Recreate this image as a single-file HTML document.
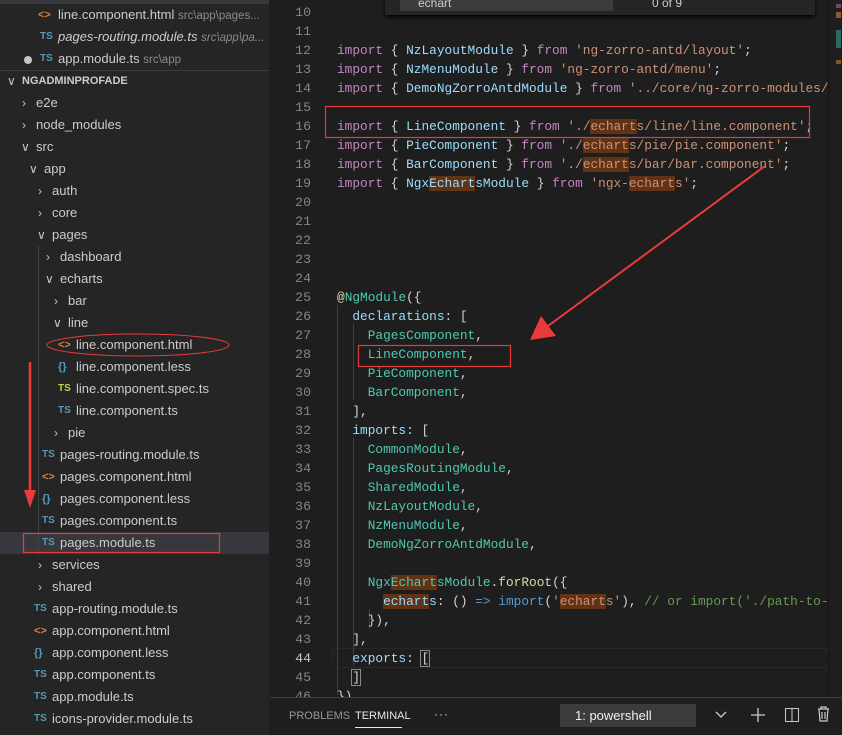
<!DOCTYPE html>
<html><head><meta charset="utf-8"><style>
*{margin:0;padding:0;box-sizing:border-box}
body{width:842px;height:735px;overflow:hidden;background:#1e1e1e;position:relative;font-family:"Liberation Sans",sans-serif}
#side{position:absolute;left:0;top:0;width:269px;height:735px;background:#252526}
.r{position:absolute;left:0;width:269px;height:22px;line-height:22px;font-size:13px;color:#cccccc;white-space:nowrap}
.r span{position:absolute;top:0}
.ar{color:#c5c5c5;font-size:12px}
.ts{color:#519aba;font-size:10px;font-weight:bold}
.tsy{color:#cbcb41;font-size:10px;font-weight:bold}
.ht{color:#e37933;font-size:11px;font-weight:bold}
.br{color:#519aba;font-size:11px;font-weight:bold}
.d{color:#8b8b8b;font-size:11.5px}
#code{position:absolute;left:270px;top:0;width:560px;height:697px;font-family:"Liberation Mono",monospace;font-size:12.8px}
.l{position:absolute;left:0;width:560px;height:19px;line-height:19px;white-space:pre;color:#d4d4d4;font-size:12.8px}
.n{position:absolute;left:0;width:41px;text-align:right;color:#858585;font-size:13.2px}
.t{position:absolute;left:67px}
.k{color:#c586c0}.c{color:#4ec9b0}.s{color:#ce9178}.p{color:#9cdcfe}.f{color:#dcdcaa}.b{color:#569cd6}.cm{color:#6a9955}
.h{background:#613214}
.g{position:absolute;width:1px;background:#404040}
</style></head><body>
<div id="side">
<div style="position:absolute;left:0;top:0;width:269px;height:4px;background:#37373d"></div>
<div class="r" style="top:4px"><span class="ht" style="left:38px">&lt;&gt;</span><span style="left:58px">line.component.html <span class="d" style="position:static">src\app\pages...</span></span></div>
<div class="r" style="top:26px"><span class="ts" style="left:40px">TS</span><span style="left:58px"><i>pages-routing.module.ts</i> <span class="d" style="position:static"><i>src\app\pa...</i></span></span></div>
<div class="r" style="top:48px"><span style="left:24px;top:8px;width:8px;height:8px;border-radius:4px;background:#c5c5c5"></span><span class="ts" style="left:40px">TS</span><span style="left:58px">app.module.ts <span class="d" style="position:static">src\app</span></span></div>
<div style="position:absolute;left:0;top:70px;width:269px;height:1px;background:#3c3c3c"></div>
<div class="r" style="top:70px"><span class="ar" style="left:7px">&#8744;</span><span style="left:22px;font-size:11px;font-weight:bold">NGADMINPROFADE</span></div>
<div class="r" style="top:92px"><span class="ar" style="left:22px">&#x203A;</span><span style="left:36px">e2e</span></div>
<div class="r" style="top:114px"><span class="ar" style="left:22px">&#x203A;</span><span style="left:36px">node_modules</span></div>
<div class="r" style="top:136px"><span class="ar" style="left:21px">&#8744;</span><span style="left:36px">src</span></div>
<div class="r" style="top:158px"><span class="ar" style="left:29px">&#8744;</span><span style="left:44px">app</span></div>
<div class="r" style="top:180px"><span class="ar" style="left:38px">&#x203A;</span><span style="left:52px">auth</span></div>
<div class="r" style="top:202px"><span class="ar" style="left:38px">&#x203A;</span><span style="left:52px">core</span></div>
<div class="r" style="top:224px"><span class="ar" style="left:37px">&#8744;</span><span style="left:52px">pages</span></div>
<div class="r" style="top:246px"><span class="ar" style="left:46px">&#x203A;</span><span style="left:60px">dashboard</span></div>
<div class="r" style="top:268px"><span class="ar" style="left:45px">&#8744;</span><span style="left:60px">echarts</span></div>
<div class="r" style="top:290px"><span class="ar" style="left:54px">&#x203A;</span><span style="left:68px">bar</span></div>
<div class="r" style="top:312px"><span class="ar" style="left:53px">&#8744;</span><span style="left:68px">line</span></div>
<div class="r" style="top:334px"><span class="ht" style="left:58px">&lt;&gt;</span><span style="left:76px">line.component.html</span></div>
<div class="r" style="top:356px"><span class="br" style="left:58px">{}</span><span style="left:76px">line.component.less</span></div>
<div class="r" style="top:378px"><span class="tsy" style="left:58px">TS</span><span style="left:76px">line.component.spec.ts</span></div>
<div class="r" style="top:400px"><span class="ts" style="left:58px">TS</span><span style="left:76px">line.component.ts</span></div>
<div class="r" style="top:422px"><span class="ar" style="left:54px">&#x203A;</span><span style="left:68px">pie</span></div>
<div class="r" style="top:444px"><span class="ts" style="left:42px">TS</span><span style="left:60px">pages-routing.module.ts</span></div>
<div class="r" style="top:466px"><span class="ht" style="left:42px">&lt;&gt;</span><span style="left:60px">pages.component.html</span></div>
<div class="r" style="top:488px"><span class="br" style="left:42px">{}</span><span style="left:60px">pages.component.less</span></div>
<div class="r" style="top:510px"><span class="ts" style="left:42px">TS</span><span style="left:60px">pages.component.ts</span></div>
<div class="r" style="top:532px;background:#37373d"><span class="ts" style="left:42px">TS</span><span style="left:60px">pages.module.ts</span></div>
<div class="r" style="top:554px"><span class="ar" style="left:38px">&#x203A;</span><span style="left:52px">services</span></div>
<div class="r" style="top:576px"><span class="ar" style="left:38px">&#x203A;</span><span style="left:52px">shared</span></div>
<div class="r" style="top:598px"><span class="ts" style="left:34px">TS</span><span style="left:52px">app-routing.module.ts</span></div>
<div class="r" style="top:620px"><span class="ht" style="left:34px">&lt;&gt;</span><span style="left:52px">app.component.html</span></div>
<div class="r" style="top:642px"><span class="br" style="left:34px">{}</span><span style="left:52px">app.component.less</span></div>
<div class="r" style="top:664px"><span class="ts" style="left:34px">TS</span><span style="left:52px">app.component.ts</span></div>
<div class="r" style="top:686px"><span class="ts" style="left:34px">TS</span><span style="left:52px">app.module.ts</span></div>
<div class="r" style="top:708px"><span class="ts" style="left:34px">TS</span><span style="left:52px">icons-provider.module.ts</span></div>
<div class="g" style="left:38px;top:246px;height:310px"></div>
</div>

<div id="code">
<div style="position:absolute;left:62px;top:648px;width:498px;height:20px;border:1px solid #282828"></div>
<div class="g" style="left:67px;top:305px;height:390px"></div>
<div class="g" style="left:83px;top:324px;height:76px"></div>
<div class="g" style="left:83px;top:438px;height:228px"></div>
<div class="g" style="left:99px;top:609px;height:19px"></div>
<div class="l" style="top:3px"><span class="n">10</span></div>
<div class="l" style="top:22px"><span class="n">11</span></div>
<div class="l" style="top:41px"><span class="n">12</span><span class="t"><span class="k">import</span> { <span class="p">NzLayoutModule</span> } <span class="k">from</span> <span class="s">'ng-zorro-antd/layout'</span>;</span></div>
<div class="l" style="top:60px"><span class="n">13</span><span class="t"><span class="k">import</span> { <span class="p">NzMenuModule</span> } <span class="k">from</span> <span class="s">'ng-zorro-antd/menu'</span>;</span></div>
<div class="l" style="top:79px"><span class="n">14</span><span class="t"><span class="k">import</span> { <span class="p">DemoNgZorroAntdModule</span> } <span class="k">from</span> <span class="s">'../core/ng-zorro-modules/</span></span></div>
<div class="l" style="top:98px"><span class="n">15</span></div>
<div class="l" style="top:117px"><span class="n">16</span><span class="t"><span class="k">import</span> { <span class="p">LineComponent</span> } <span class="k">from</span> <span class="s">'./<span class="h">echart</span>s/line/line.component'</span>;</span></div>
<div class="l" style="top:136px"><span class="n">17</span><span class="t"><span class="k">import</span> { <span class="p">PieComponent</span> } <span class="k">from</span> <span class="s">'./<span class="h">echart</span>s/pie/pie.component'</span>;</span></div>
<div class="l" style="top:155px"><span class="n">18</span><span class="t"><span class="k">import</span> { <span class="p">BarComponent</span> } <span class="k">from</span> <span class="s">'./<span class="h">echart</span>s/bar/bar.component'</span>;</span></div>
<div class="l" style="top:174px"><span class="n">19</span><span class="t"><span class="k">import</span> { <span class="p">Ngx<span class="h">Echart</span>sModule</span> } <span class="k">from</span> <span class="s">'ngx-<span class="h">echart</span>s'</span>;</span></div>
<div class="l" style="top:193px"><span class="n">20</span></div>
<div class="l" style="top:212px"><span class="n">21</span></div>
<div class="l" style="top:231px"><span class="n">22</span></div>
<div class="l" style="top:250px"><span class="n">23</span></div>
<div class="l" style="top:269px"><span class="n">24</span></div>
<div class="l" style="top:288px"><span class="n">25</span><span class="t"><span class="f">@</span><span class="c">NgModule</span>({</span></div>
<div class="l" style="top:307px"><span class="n">26</span><span class="t">  <span class="p">declarations</span>: [</span></div>
<div class="l" style="top:326px"><span class="n">27</span><span class="t">    <span class="c">PagesComponent</span>,</span></div>
<div class="l" style="top:345px"><span class="n">28</span><span class="t">    <span class="c">LineComponent</span>,</span></div>
<div class="l" style="top:364px"><span class="n">29</span><span class="t">    <span class="c">PieComponent</span>,</span></div>
<div class="l" style="top:383px"><span class="n">30</span><span class="t">    <span class="c">BarComponent</span>,</span></div>
<div class="l" style="top:402px"><span class="n">31</span><span class="t">  ],</span></div>
<div class="l" style="top:421px"><span class="n">32</span><span class="t">  <span class="p">imports</span>: [</span></div>
<div class="l" style="top:440px"><span class="n">33</span><span class="t">    <span class="c">CommonModule</span>,</span></div>
<div class="l" style="top:459px"><span class="n">34</span><span class="t">    <span class="c">PagesRoutingModule</span>,</span></div>
<div class="l" style="top:478px"><span class="n">35</span><span class="t">    <span class="c">SharedModule</span>,</span></div>
<div class="l" style="top:497px"><span class="n">36</span><span class="t">    <span class="c">NzLayoutModule</span>,</span></div>
<div class="l" style="top:516px"><span class="n">37</span><span class="t">    <span class="c">NzMenuModule</span>,</span></div>
<div class="l" style="top:535px"><span class="n">38</span><span class="t">    <span class="c">DemoNgZorroAntdModule</span>,</span></div>
<div class="l" style="top:554px"><span class="n">39</span></div>
<div class="l" style="top:573px"><span class="n">40</span><span class="t">    <span class="c">Ngx<span class="h">Echart</span>sModule</span>.<span class="f">forRoot</span>({</span></div>
<div class="l" style="top:592px"><span class="n">41</span><span class="t">      <span class="p h">echart</span><span class="p">s</span>: () <span class="b">=&gt;</span> <span class="b">import</span>(<span class="s">'<span class="h">echart</span>s'</span>), <span class="cm">// or import('./path-to-</span></span></div>
<div class="l" style="top:611px"><span class="n">42</span><span class="t">    }),</span></div>
<div class="l" style="top:630px"><span class="n">43</span><span class="t">  ],</span></div>
<div class="l" style="top:649px"><span class="n" style="color:#c6c6c6">44</span><span class="t">  <span class="p">exports</span>: <span style="outline:1px solid #888">[</span></span></div>
<div class="l" style="top:668px"><span class="n">45</span><span class="t">  <span style="outline:1px solid #888">]</span></span></div>
<div class="l" style="top:687px"><span class="n">46</span><span class="t">})</span></div>
</div>

<!-- find widget -->
<div style="position:absolute;left:385px;top:0;width:430px;height:15px;background:#252526;box-shadow:0 2px 4px #000"></div>
<div style="position:absolute;left:400px;top:0;width:213px;height:11px;background:#3c3c3c;color:#ccc;font-size:12px;line-height:6px;padding-left:18px;overflow:hidden">echart</div>
<div style="position:absolute;left:652px;top:0;font-size:12px;line-height:6px;color:#ccc;height:10px;overflow:hidden">0 of 9</div>
<!-- minimap -->
<div style="position:absolute;left:828px;top:0;width:14px;height:697px;background:#1e1e1e;border-left:1px solid #151515"></div>
<div style="position:absolute;left:836px;top:4px;width:5px;height:4px;background:#6b4a6b"></div>
<div style="position:absolute;left:836px;top:12px;width:5px;height:6px;background:#8a5a30"></div>
<div style="position:absolute;left:836px;top:30px;width:5px;height:18px;background:#2f6a60"></div>
<div style="position:absolute;left:836px;top:60px;width:5px;height:4px;background:#7a5a20"></div>

<!-- panel -->
<div style="position:absolute;left:270px;top:697px;width:572px;height:38px;background:#1e1e1e;border-top:1px solid #414141"></div>
<div style="position:absolute;left:289px;top:710px;font-size:11px;color:#969696">PROBLEMS</div>
<div style="position:absolute;left:355px;top:710px;width:47px;font-size:11px;color:#e7e7e7;text-align:center">TERMINAL</div>
<div style="position:absolute;left:355px;top:727px;width:47px;height:1px;background:#e7e7e7"></div>
<div style="position:absolute;left:434px;top:707px;font-size:12px;color:#ccc;letter-spacing:1px">···</div>
<div style="position:absolute;left:560px;top:704px;width:136px;height:23px;background:#3c3c3c;color:#f0f0f0;font-size:13px;line-height:23px;padding-left:15px">1: powershell</div>
<svg style="position:absolute;left:714px;top:710px" width="14" height="10"><path d="M2 2 L7 7 L12 2" stroke="#ccc" fill="none" stroke-width="1.3"/></svg>
<svg style="position:absolute;left:751px;top:708px" width="14" height="14"><path d="M7 0V14M0 7H14" stroke="#ccc" stroke-width="1.3"/></svg>
<svg style="position:absolute;left:785px;top:708px" width="14" height="14"><rect x="0.5" y="0.5" width="13" height="13" stroke="#ccc" fill="none"/><path d="M7 0V14" stroke="#ccc"/></svg>
<svg style="position:absolute;left:817px;top:706px" width="13" height="16"><path d="M1 3H12M4 3V1H9V3M2 3L3 15H10L11 3M5 6V13M8 6V13" stroke="#ccc" fill="none" stroke-width="1.2"/></svg>

<!-- annotations -->
<svg style="position:absolute;left:0;top:0" width="842" height="735">
<rect x="325.5" y="106.5" width="484" height="31" fill="none" stroke="#e83b3b" stroke-width="1.2"/>
<rect x="358.5" y="345.5" width="152" height="21" fill="none" stroke="#e83b3b" stroke-width="1.2"/>
<rect x="23.5" y="533.5" width="196" height="19" fill="none" stroke="#e83b3b" stroke-width="1.2"/>
<ellipse cx="138" cy="345" rx="91" ry="11" fill="none" stroke="#e83b3b" stroke-width="1"/>
<path d="M765 166 L548 326" stroke="#e83b3b" stroke-width="2"/>
<path d="M530 340 L541 316 L556 336 Z" fill="#e83b3b"/>
<path d="M30 362 L30 495" stroke="#e83b3b" stroke-width="2.5"/>
<path d="M24 490 L36 490 L30 508 Z" fill="#e83b3b"/>
</svg>
</body></html>
